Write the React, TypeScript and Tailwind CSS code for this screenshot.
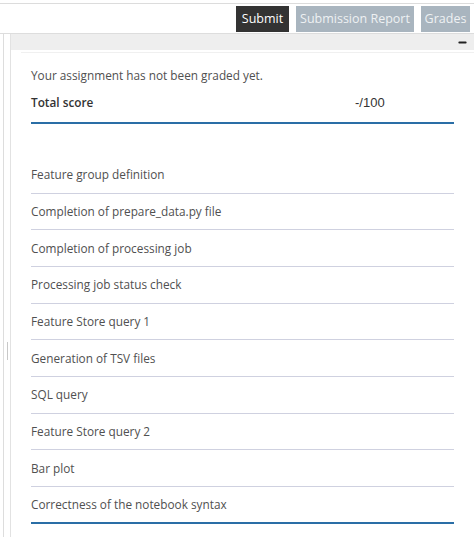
import { Minus } from "lucide-react";

const criteria = [
  "Feature group definition",
  "Completion of prepare_data.py file",
  "Completion of processing job",
  "Processing job status check",
  "Feature Store query 1",
  "Generation of TSV files",
  "SQL query",
  "Feature Store query 2",
  "Bar plot",
  "Correctness of the notebook syntax",
];

export default function App() {
  return (
    <div
      className="w-[474px] h-[537px] overflow-hidden bg-white text-[#505050]"
      style={{ fontFamily: '"Open Sans", "Liberation Sans", sans-serif' }}
    >
      {/* toolbar */}
      <div className="mt-[3px] border-t border-[#dcdcdc] h-[30px] flex items-start justify-end gap-[7px] pt-[2px] pr-[4px]">
        <button className="h-[26px] w-[53px] bg-[#333333] text-white text-[12.5px] leading-none">
          Submit
        </button>
        <button className="h-[26px] w-[118px] bg-[#a9b5bf] text-[#eef1f3] text-[12.5px] leading-none">
          Submission Report
        </button>
        <button className="h-[26px] w-[49px] bg-[#a9b5bf] text-[#eef1f3] text-[12.5px] leading-none">
          Grades
        </button>
      </div>

      <div className="flex h-[504px] border-t border-[#dddddd]">
        {/* left rail */}
        <div className="w-[3px]" />
        <div className="w-[7px] border-l border-[#dddddd] relative">
          <div className="absolute left-[3px] top-[308px] w-px h-[18px] bg-[#c8c8c8]" />
        </div>

        <div className="flex-1 border-l border-[#e2e2e2]">
          <div className="h-[16px] bg-[#eeeeee] flex items-center justify-end pr-[6px]">
            <Minus size={11} strokeWidth={4} className="text-[#222]" />
          </div>
          <div className="ml-[10px] h-[3px] border-b border-[#f0f0f0]" />

          <div className="pl-[20px] pr-[20px]">
            <p className="pt-[12px] text-[11.8px] leading-[20px]">
              Your assignment has not been graded yet.
            </p>
            <div className="mt-[7px] flex items-center h-[22px] text-[11.8px]">
              <span className="flex-1 font-semibold text-[#333]">Total score</span>
              <span
                className="w-[99px] text-[13px] text-[#333]"
                style={{ fontFamily: '"Liberation Sans", Arial, sans-serif' }}
              >
                -/100
              </span>
            </div>
            <div className="mt-[8px] h-[2px] bg-[#2a6ea6]" />

            <div className="mt-[33px]">
              {criteria.map((c, i) => (
                <div
                  key={c}
                  className={`h-[36.67px] flex items-center pt-[1px] text-[11.8px] ${
                    i === criteria.length - 1
                      ? "border-b-2 border-[#2a6ea6]"
                      : "border-b border-[#cfd1e0]"
                  }`}
                >
                  {c}
                </div>
              ))}
            </div>
          </div>
        </div>
      </div>
    </div>
  );
}
